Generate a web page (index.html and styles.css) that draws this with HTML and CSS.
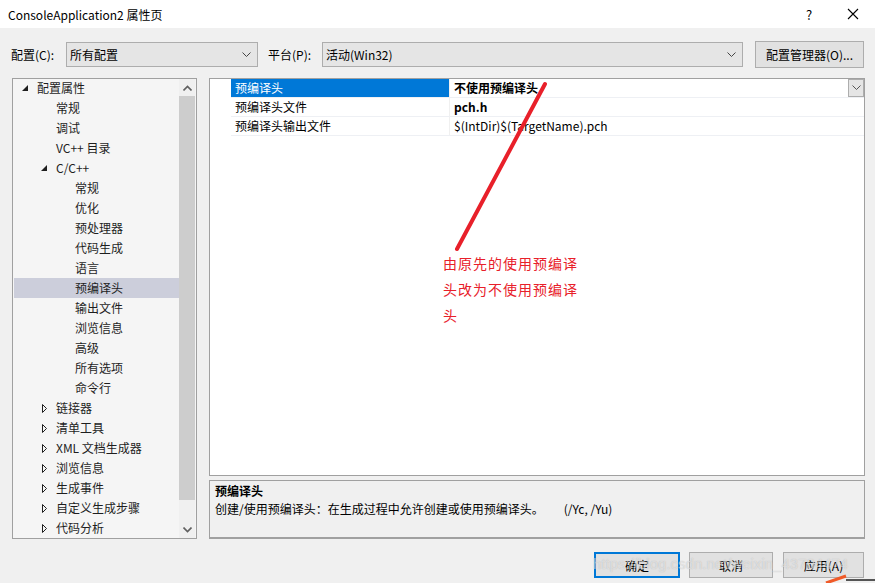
FILE: index.html
```html
<!DOCTYPE html>
<html lang="zh">
<head>
<meta charset="utf-8">
<title>ConsoleApplication2 属性页</title>
<link rel="stylesheet" href="styles.css">
</head>
<body>
<div class="window">
  <div class="titlebar">
    <span class="title">ConsoleApplication2 属性页</span>
    <span class="help">?</span>
    <span class="close"><svg width="12" height="12" viewBox="0 0 12 12"><path d="M1 1L11 11M11 1L1 11" stroke="#000" stroke-width="1.1" fill="none"/></svg></span>
  </div>

  <div class="toolbar">
    <span class="lbl lbl-config">配置(C):</span>
    <div class="combo combo-config"><span>所有配置</span><svg class="chev" width="9" height="6" viewBox="0 0 9 6"><path d="M0.5 0.5L4.5 4.5L8.5 0.5" stroke="#444" fill="none"/></svg></div>
    <span class="lbl lbl-plat">平台(P):</span>
    <div class="combo combo-plat"><span>活动(Win32)</span><svg class="chev" width="9" height="6" viewBox="0 0 9 6"><path d="M0.5 0.5L4.5 4.5L8.5 0.5" stroke="#444" fill="none"/></svg></div>
    <button class="btn btn-mgr">配置管理器(O)...</button>
  </div>

  <div class="main">
    <div class="tree">
      <div class="tree-items">
        <div class="node l0"><span class="tri"><svg width="6" height="6" viewBox="0 0 6 6"><path d="M6 0L6 6L0 6Z" fill="#1e1e1e"/></svg></span>配置属性</div>
        <div class="node l1">常规</div>
        <div class="node l1">调试</div>
        <div class="node l1">VC++ 目录</div>
        <div class="node l1 exp"><span class="tri"><svg width="6" height="6" viewBox="0 0 6 6"><path d="M6 0L6 6L0 6Z" fill="#1e1e1e"/></svg></span>C/C++</div>
        <div class="node l2">常规</div>
        <div class="node l2">优化</div>
        <div class="node l2">预处理器</div>
        <div class="node l2">代码生成</div>
        <div class="node l2">语言</div>
        <div class="node l2 sel">预编译头</div>
        <div class="node l2">输出文件</div>
        <div class="node l2">浏览信息</div>
        <div class="node l2">高级</div>
        <div class="node l2">所有选项</div>
        <div class="node l2">命令行</div>
        <div class="node l1 exp col"><span class="tri"><svg width="5" height="9" viewBox="0 0 5 9"><path d="M0.5 0.5L4.5 4.5L0.5 8.5Z" fill="none" stroke="#1e1e1e"/></svg></span>链接器</div>
        <div class="node l1 exp col"><span class="tri"><svg width="5" height="9" viewBox="0 0 5 9"><path d="M0.5 0.5L4.5 4.5L0.5 8.5Z" fill="none" stroke="#1e1e1e"/></svg></span>清单工具</div>
        <div class="node l1 exp col"><span class="tri"><svg width="5" height="9" viewBox="0 0 5 9"><path d="M0.5 0.5L4.5 4.5L0.5 8.5Z" fill="none" stroke="#1e1e1e"/></svg></span>XML 文档生成器</div>
        <div class="node l1 exp col"><span class="tri"><svg width="5" height="9" viewBox="0 0 5 9"><path d="M0.5 0.5L4.5 4.5L0.5 8.5Z" fill="none" stroke="#1e1e1e"/></svg></span>浏览信息</div>
        <div class="node l1 exp col"><span class="tri"><svg width="5" height="9" viewBox="0 0 5 9"><path d="M0.5 0.5L4.5 4.5L0.5 8.5Z" fill="none" stroke="#1e1e1e"/></svg></span>生成事件</div>
        <div class="node l1 exp col"><span class="tri"><svg width="5" height="9" viewBox="0 0 5 9"><path d="M0.5 0.5L4.5 4.5L0.5 8.5Z" fill="none" stroke="#1e1e1e"/></svg></span>自定义生成步骤</div>
        <div class="node l1 exp col"><span class="tri"><svg width="5" height="9" viewBox="0 0 5 9"><path d="M0.5 0.5L4.5 4.5L0.5 8.5Z" fill="none" stroke="#1e1e1e"/></svg></span>代码分析</div>
      </div>
      <div class="vscroll">
        <div class="sarrow"><svg width="9" height="6" viewBox="0 0 9 6"><path d="M0.5 5.5L4.5 1.5L8.5 5.5" stroke="#606060" stroke-width="1.6" fill="none"/></svg></div>
        <div class="strack"><div class="sthumb"></div></div>
        <div class="sarrow"><svg width="9" height="6" viewBox="0 0 9 6"><path d="M0.5 0.5L4.5 4.5L8.5 0.5" stroke="#606060" stroke-width="1.6" fill="none"/></svg></div>
      </div>
    </div>

    <div class="right">
      <div class="grid">
        <div class="prow">
          <div class="pname psel">预编译头</div>
          <div class="pval bold">不使用预编译头<span class="ddbtn"><svg width="9" height="6" viewBox="0 0 9 6"><path d="M0.5 0.5L4.5 4.5L8.5 0.5" stroke="#555" fill="none"/></svg></span></div>
        </div>
        <div class="prow">
          <div class="pname">预编译头文件</div>
          <div class="pval bold">pch.h</div>
        </div>
        <div class="prow">
          <div class="pname">预编译头输出文件</div>
          <div class="pval">$(IntDir)$(TargetName).pch</div>
        </div>
      </div>
      <div class="desc">
        <div class="desc-title">预编译头</div>
        <div class="desc-text">创建/使用预编译头：在生成过程中允许创建或使用预编译头。<span class="desc-sw">(/Yc, /Yu)</span></div>
      </div>
    </div>
  </div>

  <div class="buttons">
    <button class="btn btn-ok">确定</button>
    <button class="btn btn-cancel">取消</button>
    <button class="btn btn-apply">应用(A)</button>
  </div>

  <svg class="annot-line" width="875" height="583" viewBox="0 0 875 583">
    <path d="M545 84L457 249" stroke="#e8202a" stroke-width="4" stroke-linecap="round" fill="none"/>
    <path d="M826 583L846 576" stroke="#f05a28" stroke-width="3" fill="none"/>
    <path d="M846 580L875 580" stroke="#555" stroke-width="2" fill="none"/>
  </svg>
  <div class="annot-text">由原先的使用预编译<br>头改为不使用预编译<br>头</div>
  <div class="watermark">https://blog.csdn.net/weixin_43704474</div>
</div>
</body>
</html>
```
FILE: styles.css
```css
html, body {
  margin: 0;
  padding: 0;
}
body {
  width: 875px;
  height: 583px;
  overflow: hidden;
  background: #f0f0f0;
  font-family: "Noto Sans CJK SC", "Noto Sans", sans-serif;
  font-size: 12px;
  color: #1e1e1e;
}
.window {
  position: relative;
  width: 875px;
  height: 583px;
  display: flex;
  flex-direction: column;
}
.titlebar {
  height: 28px;
  background: #fff;
  display: flex;
  align-items: center;
  padding-left: 8px;
  color: #000;
}
.title {
  flex: 1;
  font-size: 12px;
}
.help {
  width: 14px;
  text-align: center;
  font-size: 13px;
  margin-right: 31px;
}
.close {
  width: 12px;
  height: 12px;
  display: flex;
  margin-right: 16px;
}
.toolbar {
  display: flex;
  align-items: center;
  margin-top: 13px;
  height: 27px;
  padding-left: 11px;
  color: #000;
}
.lbl-config { width: 55px; }
.lbl-plat { width: 54px; margin-left: 10px; }
.combo {
  border: 1px solid #adadad;
  background: #e5e5e5;
  display: flex;
  align-items: center;
  padding-left: 3px;
  box-sizing: border-box;
  height: 25px;
}
.combo span { flex: 1; }
.combo .chev { margin-right: 6px; }
.combo-config { width: 192px; }
.combo-plat { width: 421px; }
.btn {
  font-family: inherit;
  font-size: 12px;
  color: #000;
  background: #e1e1e1;
  border: 1px solid #adadad;
  padding: 0;
  box-sizing: border-box;
}
.btn-mgr {
  width: 109px;
  height: 27px;
  margin-left: 12px;
}
.main {
  display: flex;
  margin-top: 10px;
  padding-left: 12px;
  gap: 12px;
  height: 461px;
}
.tree {
  width: 185px;
  height: 461px;
  box-sizing: border-box;
  border: 1px solid #a0a0a0;
  background: #f5f5f5;
  display: flex;
  overflow: hidden;
}
.tree-items {
  flex: 1;
  margin-top: -1px;
  padding-left: 1px;
}
.node {
  height: 20px;
  line-height: 20px;
  display: flex;
  align-items: center;
  white-space: nowrap;
}
.node.l0 { padding-left: 8px; }
.node.l0 .tri { width: 15px; }
.node.l1 { padding-left: 42px; }
.node.l2 { padding-left: 61px; }
.node.l1.exp { padding-left: 27px; }
.node.l1.exp.col { padding-left: 28px; }
.node .tri {
  width: 14px;
  display: flex;
  align-items: center;
}
.node.l1.exp .tri { width: 15px; }
.node.l1.exp.col .tri { width: 14px; }
.node.sel { background: #cccedb; }
.vscroll {
  width: 16px;
  background: #f0f0f0;
  display: flex;
  flex-direction: column;
  margin-right: 1px;
}
.sarrow {
  height: 17px;
  display: flex;
  align-items: center;
  justify-content: center;
}
.strack {
  flex: 1;
  display: flex;
  flex-direction: column;
}
.sthumb {
  height: 404px;
  background: #cdcdcd;
}
.right {
  width: 656px;
  display: flex;
  flex-direction: column;
  gap: 4px;
}
.grid {
  height: 398px;
  box-sizing: border-box;
  border: 1px solid #a0a0a0;
  background: #fff;
  padding-left: 21px;
}
.prow {
  display: flex;
  height: 19px;
  border-bottom: 1px solid #eef0f4;
  box-sizing: border-box;
}
.pname {
  width: 219px;
  padding-left: 4px;
  line-height: 18px;
  color: #000;
  border-right: 1px solid #f0f0f0;
  box-sizing: border-box;
}
.pname.psel {
  background: #0078d7;
  color: #fff;
}
.pval {
  flex: 1;
  padding-left: 4px;
  line-height: 18px;
  color: #000;
  display: flex;
}
.pval.bold { font-weight: bold; }
.ddbtn {
  margin-left: auto;
  width: 16px;
  height: 18px;
  box-sizing: border-box;
  border: 1px solid #adadad;
  background: #e5e5e5;
  display: flex;
  align-items: center;
  justify-content: center;
}
.desc {
  height: 59px;
  box-sizing: border-box;
  border: 1px solid #a0a0a0;
  border-bottom: 2px solid #a0a0a0;
  background: #f0f0f0;
  padding: 1px 5px;
  color: #000;
}
.desc-title {
  font-weight: bold;
  line-height: 18px;
}
.desc-text {
  line-height: 18px;
}
.desc-sw { margin-left: 20px; }
.buttons {
  display: flex;
  margin-top: 13px;
  padding-left: 594px;
}
.btn-ok {
  width: 86px;
  height: 26px;
  border: 2px solid #0078d7;
}
.btn-cancel {
  width: 84px;
  height: 26px;
  margin-left: 9px;
}
.btn-apply {
  width: 81px;
  height: 26px;
  margin-left: 10px;
}
.annot-line {
  position: absolute;
  left: 0;
  top: 0;
  pointer-events: none;
}
.annot-text {
  position: absolute;
  left: 443px;
  top: 250px;
  font-size: 14px;
  letter-spacing: 1px;
  line-height: 26px;
  color: #e8202a;
}
.watermark {
  position: absolute;
  left: 593px;
  top: 555px;
  font-family: "Liberation Sans", sans-serif;
  font-size: 15px;
  color: rgba(255, 255, 255, 0.5);
  text-shadow: 0 0 1px rgba(120, 120, 120, 0.45);
  white-space: nowrap;
  pointer-events: none;
}
```
